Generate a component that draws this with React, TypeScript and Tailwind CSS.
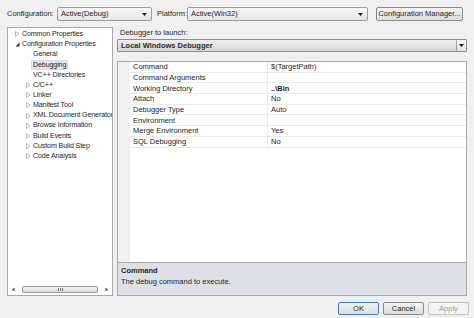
const font = { fontFamily: '"Liberation Sans", Arial, sans-serif' };

function DownArrow() {
  return (
    <svg width="5" height="3" viewBox="0 0 5 3">
      <path d="M0 0 H5 L2.5 3 Z" fill="#1a1a1a" />
    </svg>
  );
}

function Combo({ text, width }: { text: string; width: string }) {
  return (
    <div
      className={`${width} h-[14px] flex items-center justify-between pl-[3px] pr-[4px] border border-[#9c9c9c] rounded-[2px] bg-gradient-to-b from-[#f7f7f7] to-[#e6e6e6] text-[#1a1a1a]`}
    >
      <span>{text}</span>
      <DownArrow />
    </div>
  );
}

function Button({ label, width, primary, disabled }: { label: string; width: string; primary?: boolean; disabled?: boolean }) {
  return (
    <div
      className={`${width} h-[13px] flex items-center justify-center rounded-[2px] border ${
        primary
          ? 'border-[#3c7fb1] bg-gradient-to-b from-[#f4f4f4] to-[#dcdcdc] text-[#1a1a1a]'
          : disabled
          ? 'border-[#c4c4c4] bg-[#f4f4f4] text-[#a0a0a0]'
          : 'border-[#8a8a8a] bg-gradient-to-b from-[#f4f4f4] to-[#dcdcdc] text-[#1a1a1a]'
      }`}
    >
      {label}
    </div>
  );
}

const tree = [
  { label: 'Common Properties', level: 0, arrow: 'closed' },
  { label: 'Configuration Properties', level: 0, arrow: 'open' },
  { label: 'General', level: 1, arrow: 'none' },
  { label: 'Debugging', level: 1, arrow: 'none', selected: true },
  { label: 'VC++ Directories', level: 1, arrow: 'none' },
  { label: 'C/C++', level: 1, arrow: 'closed' },
  { label: 'Linker', level: 1, arrow: 'closed' },
  { label: 'Manifest Tool', level: 1, arrow: 'closed' },
  { label: 'XML Document Generator', level: 1, arrow: 'closed' },
  { label: 'Browse Information', level: 1, arrow: 'closed' },
  { label: 'Build Events', level: 1, arrow: 'closed' },
  { label: 'Custom Build Step', level: 1, arrow: 'closed' },
  { label: 'Code Analysis', level: 1, arrow: 'closed' },
];

const props = [
  { name: 'Command', value: '$(TargetPath)' },
  { name: 'Command Arguments', value: '' },
  { name: 'Working Directory', value: '..\\Bin', bold: true },
  { name: 'Attach', value: 'No' },
  { name: 'Debugger Type', value: 'Auto' },
  { name: 'Environment', value: '' },
  { name: 'Merge Environment', value: 'Yes' },
  { name: 'SQL Debugging', value: 'No' },
];

function TreeArrow({ kind }: { kind: string }) {
  if (kind === 'open') {
    return (
      <svg width="5" height="5" viewBox="0 0 5 5">
        <path d="M4.5 0.5 V4.5 H0.5 Z" fill="#333" />
      </svg>
    );
  }
  if (kind === 'closed') {
    return (
      <svg width="5" height="6" viewBox="0 0 5 6">
        <path d="M0.5 0.5 L4 3 L0.5 5.5 Z" fill="none" stroke="#a6a6a6" strokeWidth="0.8" />
      </svg>
    );
  }
  return null;
}

export default function App() {
  return (
    <div className="w-[474px] h-[318px] bg-[#f0f0f0] overflow-hidden text-[7.5px] text-[#1e1e1e]" style={font}>
      {/* top bar */}
      <div className="flex items-center h-[14px] mt-[7px] pl-[7px]">
        <span className="w-[50px]">Configuration:</span>
        <Combo text="Active(Debug)" width="w-[95px]" />
        <span className="w-[35px] pl-[5px]">Platform:</span>
        <Combo text="Active(Win32)" width="w-[181px]" />
        <div className="ml-[8px] w-[87px] h-[14px] flex items-center justify-center rounded-[2px] border border-[#8a8a8a] bg-gradient-to-b from-[#f4f4f4] to-[#dcdcdc]">
          Configuration Manager...
        </div>
      </div>

      <div className="flex mt-[6px] pl-[7px] h-[269px]">
        {/* tree */}
        <div className="w-[106px] h-full border border-[#a9a9a9] bg-white flex flex-col overflow-hidden">
          <div className="flex-1 pt-[1px] overflow-hidden text-[7.1px] tracking-[-0.12px]">
            {tree.map((t) => (
              <div key={t.label} className="h-[10.2px] flex items-center whitespace-nowrap">
                <div className={`${t.level === 0 ? 'w-[14px] pl-[7px]' : 'w-[25px] pl-[18px]'} flex items-center shrink-0`}>
                  <TreeArrow kind={t.arrow} />
                </div>
                <span className={t.selected ? 'bg-[#e6e6e6] border border-[#dadada] px-[1px] -ml-[2px] leading-[8px]' : ''}>{t.label}</span>
              </div>
            ))}
          </div>
          <div className="h-[10px] mb-[1px] flex items-center px-[2px] gap-[2px]">
            <svg width="7" height="7" viewBox="0 0 7 7">
              <path d="M4.5 1.5 L2 3.5 L4.5 5.5 Z" fill="#555" />
            </svg>
            <div className="flex-1 h-[7px] mx-[3px] rounded-[2px] border border-[#9a9a9a] bg-gradient-to-b from-[#f3f3f3] to-[#d8d8d8] flex items-center justify-center">
              <div className="flex gap-[1px]">
                <div className="w-[1px] h-[3px] bg-[#777]" />
                <div className="w-[1px] h-[3px] bg-[#777]" />
                <div className="w-[1px] h-[3px] bg-[#777]" />
              </div>
            </div>
            <svg width="7" height="7" viewBox="0 0 7 7">
              <path d="M2.5 1.5 L5 3.5 L2.5 5.5 Z" fill="#555" />
            </svg>
          </div>
        </div>

        {/* right */}
        <div className="ml-[4px] w-[350px] flex flex-col">
          <div className="h-[10px] flex items-center pl-[3px] mt-[1px]">Debugger to launch:</div>
          <div className="mt-[1px] h-[13px] flex items-center border border-[#8e8e8e] rounded-[1px] bg-gradient-to-b from-[#eeeeee] to-[#d6d6d6]">
            <span className="flex-1 pl-[3px] font-bold text-[#2a2a2a]">Local Windows Debugger</span>
            <div className="w-[10px] h-[11px] flex items-center justify-center border-l border-[#a4a4a4] bg-gradient-to-b from-[#f7f7f7] to-[#e2e2e2]">
              <DownArrow />
            </div>
          </div>

          <div className="mt-[9px] flex-1 flex flex-col border border-[#a9a9a9] bg-white">
            <div className="flex-1 flex">
              <div className="w-[12px] bg-[#f0f0f0]" />
              <div className="flex-1">
                {props.map((p) => (
                  <div key={p.name} className="h-[10.7px] flex items-center border-b border-[#ececec]">
                    <div className="w-[138px] h-full flex items-center pl-[3px] border-r border-[#ececec]">{p.name}</div>
                    <div className={`flex-1 pl-[3px] ${p.bold ? 'font-bold' : ''}`}>{p.value}</div>
                  </div>
                ))}
              </div>
            </div>
            <div className="h-[33px] border-t border-[#a9a9a9] bg-[#dde0e6] px-[3px] pt-[3px]">
              <div className="font-bold leading-[10px]">Command</div>
              <div className="leading-[11px]">The debug command to execute.</div>
            </div>
          </div>
        </div>
      </div>

      {/* bottom buttons */}
      <div className="flex justify-end gap-[4px] mt-[6px] pr-[5px]">
        <Button label="OK" width="w-[41px]" primary />
        <Button label="Cancel" width="w-[41px]" />
        <Button label="Apply" width="w-[41px]" disabled />
      </div>
    </div>
  );
}
